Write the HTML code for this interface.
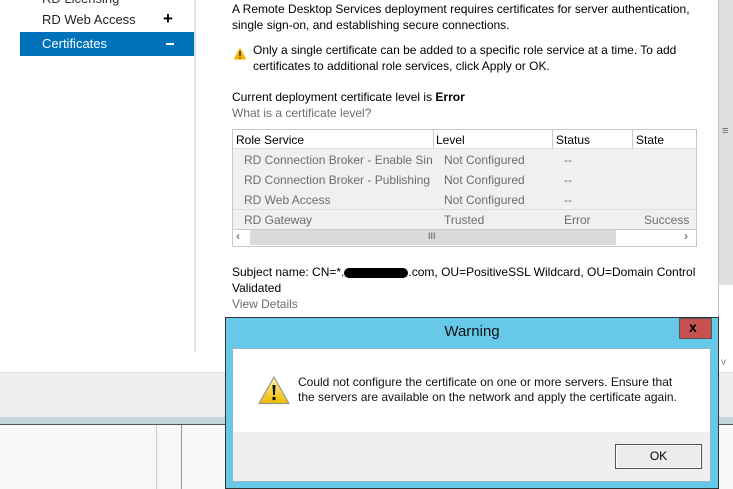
<!DOCTYPE html>
<html><head><meta charset="utf-8"><style>
*{margin:0;padding:0;box-sizing:border-box}
body{width:733px;height:489px;overflow:hidden;background:#fff;font-family:"Liberation Sans",sans-serif;font-size:12px;color:#000;position:relative}
.a{position:absolute;white-space:nowrap}
.g{color:#6d6d6d}
</style></head><body>
<div class="a" style="left:42px;top:-9px;font-size:13px;color:#333">RD Licensing</div>
<div class="a" style="left:42px;top:12px;font-size:13px;color:#222">RD Web Access</div>
<div class="a" style="left:163px;top:9px;font-size:17px;font-weight:bold">+</div>
<div class="a" style="left:20px;top:32px;width:174px;height:24px;background:#0072bc"></div>
<div class="a" style="left:42px;top:36px;font-size:13px;color:#fff">Certificates</div>
<div class="a" style="left:166px;top:43px;width:8px;height:2px;background:#fff"></div>
<div class="a" style="left:194px;top:0;width:2px;height:352px;background:#e3e3e3"></div>

<div class="a" style="left:232px;top:1px;line-height:16px">A Remote Desktop Services deployment requires certificates for server authentication,<br>single sign-on, and establishing secure connections.</div>
<svg class="a" style="left:233px;top:47px" width="14" height="13" viewBox="0 0 14 13"><path d="M7 0.5L13.5 12.5H0.5Z" fill="#f6b600"/><rect x="6.3" y="4" width="1.4" height="5" fill="#222"/><rect x="6.3" y="10" width="1.4" height="1.4" fill="#222"/></svg>
<div class="a" style="left:253px;top:42px;line-height:16px">Only a single certificate can be added to a specific role service at a time. To add<br>certificates to additional role services, click Apply or OK.</div>
<div class="a" style="left:232px;top:90px">Current deployment certificate level is <b>Error</b></div>
<div class="a g" style="left:232px;top:106px">What is a certificate level?</div>

<div class="a" style="left:232px;top:129px;width:465px;height:118px;border:1px solid #c8c8c8;background:#f0f0f0"></div>
<div class="a" style="left:233px;top:130px;width:463px;height:19px;background:#fff;border-bottom:1px solid #e0e0e0"></div>
<div class="a" style="left:433px;top:130px;width:1px;height:19px;background:#ccc"></div>
<div class="a" style="left:552px;top:130px;width:1px;height:19px;background:#ccc"></div>
<div class="a" style="left:632px;top:130px;width:1px;height:19px;background:#ccc"></div>
<div class="a" style="left:236px;top:133px">Role Service</div>
<div class="a" style="left:436px;top:133px">Level</div>
<div class="a" style="left:556px;top:133px">Status</div>
<div class="a" style="left:636px;top:133px">State</div>
<div class="a g" style="left:244px;top:153px;width:189px;overflow:hidden">RD Connection Broker - Enable Single</div>
<div class="a g" style="left:444px;top:153px">Not Configured</div><div class="a g" style="left:564px;top:153px">--</div>
<div class="a g" style="left:244px;top:173px">RD Connection Broker - Publishing</div>
<div class="a g" style="left:444px;top:173px">Not Configured</div><div class="a g" style="left:564px;top:173px">--</div>
<div class="a g" style="left:244px;top:193px">RD Web Access</div>
<div class="a g" style="left:444px;top:193px">Not Configured</div><div class="a g" style="left:564px;top:193px">--</div>
<div class="a" style="left:233px;top:209px;width:463px;height:1px;background:#ddd"></div>
<div class="a g" style="left:244px;top:213px">RD Gateway</div>
<div class="a g" style="left:444px;top:213px">Trusted</div><div class="a g" style="left:564px;top:213px">Error</div><div class="a g" style="left:644px;top:213px">Success</div>
<div class="a" style="left:233px;top:229px;width:463px;height:17px;background:#fff;border-top:1px solid #ccc"></div>
<div class="a" style="left:250px;top:230px;width:366px;height:15px;background:#dadada"></div>
<div class="a" style="left:236px;top:229px;color:#555">&lsaquo;</div>
<div class="a" style="left:684px;top:229px;color:#555">&rsaquo;</div>
<div class="a" style="left:428px;top:231px;font-size:9px;color:#555">III</div>

<div class="a" style="left:232px;top:265px">Subject name: CN=*.<span style="display:inline-block;width:64px;height:10px;background:#000;border-radius:5px;vertical-align:middle"></span>.com, OU=PositiveSSL Wildcard, OU=Domain Control</div>
<div class="a" style="left:232px;top:281px">Validated</div>
<div class="a g" style="left:232px;top:297px">View Details</div>

<div class="a" style="left:718px;top:0;width:1px;height:372px;background:#c8c8c8"></div>
<div class="a" style="left:719px;top:0;width:14px;height:285px;background:#dedede"></div>
<div class="a" style="left:722px;top:125px;font-size:11px;color:#666">≡</div>
<div class="a" style="left:721px;top:357px;font-size:10px;color:#888">v</div>

<div class="a" style="left:0;top:372px;width:733px;height:1px;background:#dcdcdc"></div>
<div class="a" style="left:0;top:373px;width:733px;height:44px;background:#eeeeee"></div>
<div class="a" style="left:0;top:417px;width:733px;height:7px;background:#c3d5dc"></div>
<div class="a" style="left:0;top:424px;width:733px;height:1px;background:#555"></div>
<div class="a" style="left:0;top:425px;width:733px;height:64px;background:#f7f7f7"></div>
<div class="a" style="left:156px;top:425px;width:1px;height:64px;background:#ccc"></div>
<div class="a" style="left:181px;top:425px;width:1px;height:64px;background:#999"></div>

<div class="a" style="left:225px;top:317px;width:494px;height:172px;background:#66c9e8;border:1px solid #333"></div>
<div class="a" style="left:225px;top:323px;width:494px;text-align:center;font-size:15px;color:#111">Warning</div>
<div class="a" style="left:679px;top:318px;width:33px;height:21px;background:#c75050;border:1px solid #555"></div>
<div class="a" style="left:689px;top:319px;font-size:14px;font-weight:bold">x</div>
<div class="a" style="left:232px;top:348px;width:479px;height:134px;background:#fff;border:1px solid #9ab8c8"></div>
<div class="a" style="left:233px;top:432px;width:477px;height:49px;background:#efefef"></div>
<svg class="a" style="left:258px;top:376px" width="32" height="29" viewBox="0 0 32 29"><defs><linearGradient id="w" x1="0" y1="0" x2="0" y2="1"><stop offset="0" stop-color="#fff3a0"/><stop offset="1" stop-color="#f0b800"/></linearGradient></defs><path d="M16 1L31 27.5H1Z" fill="url(#w)" stroke="#999" stroke-width="1.2" stroke-linejoin="round"/><path d="M14.5 9h3l-0.6 10h-1.8z" fill="#111"/><circle cx="16" cy="22.5" r="1.7" fill="#111"/></svg>
<div class="a" style="left:298px;top:375px;line-height:15px;color:#111">Could not configure the certificate on one or more servers. Ensure that<br>the servers are available on the network and apply the certificate again.</div>
<div class="a" style="left:615px;top:444px;width:87px;height:25px;background:#ececec;border:1px solid #555;box-shadow:inset 0 0 0 1px #fff"></div>
<div class="a" style="left:615px;top:449px;width:87px;text-align:center">OK</div>
</body></html>
